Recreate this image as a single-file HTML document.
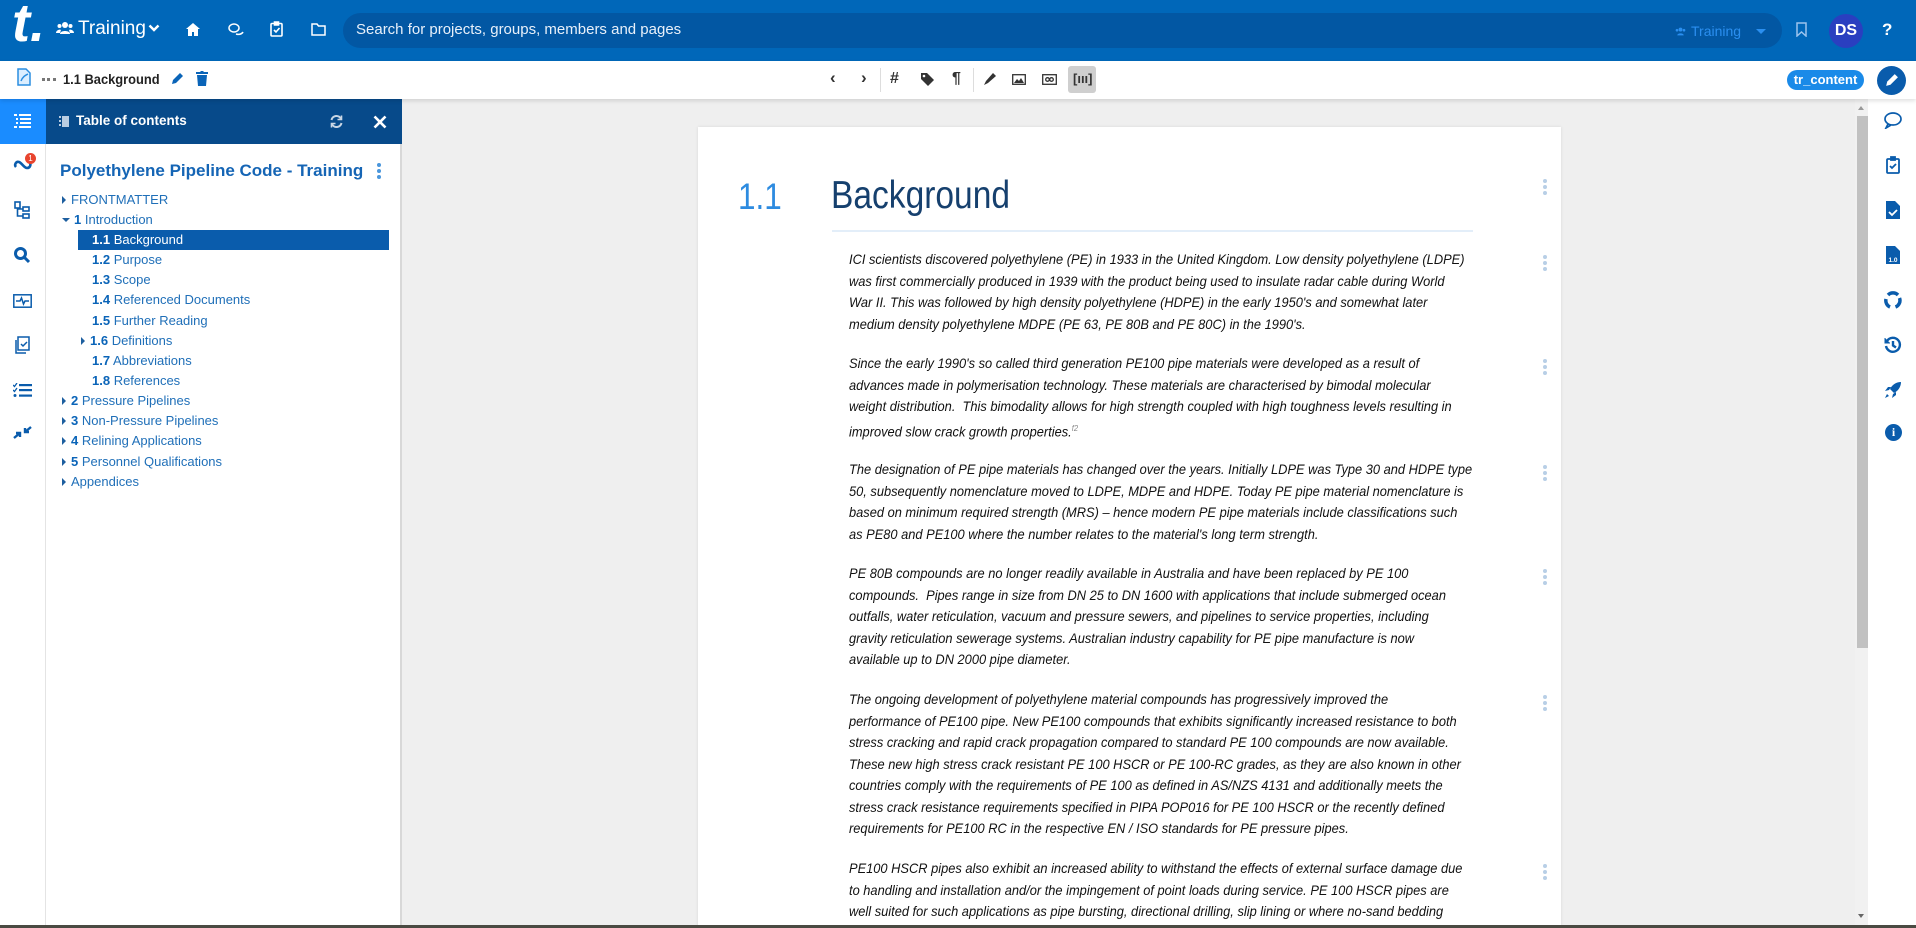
<!DOCTYPE html>
<html><head><meta charset="utf-8"><style>
*{box-sizing:border-box;margin:0;padding:0}
body{width:1916px;height:928px;overflow:hidden;position:relative;background:#efefef;font-family:"Liberation Sans",sans-serif}
.abs{position:absolute}
#top{left:0;top:0;width:1916px;height:61px;background:#0067b9}
#bar2{left:0;top:61px;width:1916px;height:38px;background:#fff;box-shadow:0 2px 4px rgba(0,0,0,.12);z-index:2}
#rail{left:0;top:99px;width:46px;height:829px;background:#fff;border-right:1px solid #e4e4e4}
#toc{left:46px;top:99px;width:356px;height:829px;background:#fff;border-right:2px solid #d8d8d8}
#tochd{left:46px;top:99px;width:356px;height:45px;background:#074a8a}
.ti{position:absolute;font-size:13px;color:#1f6fb8;white-space:nowrap}
.ti b{color:#0a64b8;font-weight:bold}
.tri{display:inline-block;width:0;height:0;border-left:4px solid #1d5f9f;border-top:4px solid transparent;border-bottom:4px solid transparent;margin-right:5px;vertical-align:0}
.trid{display:inline-block;width:0;height:0;border-top:4px solid #1d5f9f;border-left:4px solid transparent;border-right:4px solid transparent;margin-right:4px;vertical-align:2px}
#page{left:698px;top:127px;width:863px;height:801px;background:#fff;box-shadow:0 0 3px rgba(0,0,0,.1)}
.p{position:absolute;left:849px;font-style:italic;font-size:13.6px;color:#111;white-space:nowrap;transform:scaleX(.945);transform-origin:0 0;line-height:21.5px}
.dots{position:absolute;left:1543px;width:4px}
.dots i{display:block;width:4px;height:4px;border-radius:2px;background:#b8cfe6;margin-bottom:2px}
</style></head><body>
<div id="top" class="abs"></div>
<div class="abs" style="left:12px;top:-8px;color:#fff;font:italic bold 54px 'Liberation Sans',sans-serif">t.</div>
<svg class="abs" style="left:56px;top:21px" width="18" height="14" viewBox="0 0 18 14" fill="#fff"><circle cx="9" cy="4" r="3"/><circle cx="3.5" cy="5" r="2"/><circle cx="14.5" cy="5" r="2"/><path d="M4 13c0-4 10-4 10 0z"/><path d="M0 12c0-3 4-4 5-3l-1 3zM18 12c0-3-4-4-5-3l1 3z"/></svg>
<div class="abs" style="left:78px;top:18px;color:#fff;font-size:19px">Training</div>
<svg class="abs" style="left:148px;top:24px" width="12" height="9" viewBox="0 0 12 9"><path d="M1.5 1.5l4.5 4.5 4.5-4.5" stroke="#fff" stroke-width="2.4" fill="none"/></svg>
<svg class="abs" style="left:186px;top:23px" width="14" height="13" viewBox="0 0 14 13" fill="#fff"><path d="M7 0L0 6h2v7h4V9h2v4h4V6h2z"/></svg>
<svg class="abs" style="left:228px;top:23px" width="16" height="14" viewBox="0 0 16 14" fill="none" stroke="#fff" stroke-width="1.5"><ellipse cx="6" cy="5" rx="5" ry="4"/><path d="M8 11c3 1 6 0 7-2"/></svg>
<svg class="abs" style="left:270px;top:21px" width="13" height="16" viewBox="0 0 13 16" fill="none" stroke="#fff" stroke-width="1.6"><rect x="1" y="2.5" width="11" height="12.5" rx="1"/><path d="M4 9l2 2 3.5-4"/><path d="M4.5 1h4v3h-4z" fill="#fff"/></svg>
<svg class="abs" style="left:311px;top:23px" width="15" height="13" viewBox="0 0 15 13" fill="none" stroke="#fff" stroke-width="1.5"><path d="M1 1h5l1.5 2H14v9H1z"/></svg>
<div class="abs" style="left:343px;top:13px;width:1439px;height:35px;border-radius:18px;background:#0257a3"></div>
<div class="abs" style="left:356px;top:21px;color:#e8f0fa;font-size:15px">Search for projects, groups, members and pages</div>
<svg class="abs" style="left:1674px;top:27px" width="13" height="9" viewBox="0 0 18 14" fill="#2b8ff0"><circle cx="9" cy="4" r="3"/><circle cx="3.5" cy="5" r="2"/><circle cx="14.5" cy="5" r="2"/><path d="M4 13c0-4 10-4 10 0z"/></svg>
<div class="abs" style="left:1691px;top:23px;color:#2b8ff0;font-size:14px">Training</div>
<div class="abs" style="left:1756px;top:29px;border-top:5px solid #2b8ff0;border-left:5px solid transparent;border-right:5px solid transparent"></div>
<svg class="abs" style="left:1796px;top:22px" width="11" height="15" viewBox="0 0 11 15" fill="none" stroke="#9cc4ee" stroke-width="1.5"><path d="M1 1h9v13l-4.5-4-4.5 4z"/></svg>
<div class="abs" style="left:1829px;top:14px;width:34px;height:34px;border-radius:17px;background:#2a3fc0;color:#fff;font-weight:bold;font-size:16px;text-align:center;line-height:34px">DS</div>
<div class="abs" style="left:1882px;top:20px;color:#fff;font-weight:bold;font-size:17px">?</div>

<div id="bar2" class="abs"></div>
<div style="position:absolute;z-index:3;left:0;top:61px;width:1916px;height:38px">
<svg class="abs" style="left:17px;top:7px" width="14" height="18" viewBox="0 0 14 18"><path d="M1 1h8l4 4v12H1z" fill="#dbeeff" stroke="#2a8de0" stroke-width="1.5"/><path d="M4 13c2-5 5-6 7-7" stroke="#2a8de0" stroke-width="1.5" fill="none"/></svg>
<div class="abs" style="left:42px;top:17px;width:14px;height:3px;border-top:3px dotted #777"></div>
<div class="abs" style="left:63px;top:10px;font-weight:bold;font-size:14px;color:#222;transform:scaleX(.92);transform-origin:0 0">1.1 Background</div>
<svg class="abs" style="left:170px;top:11px" width="14" height="14" viewBox="0 0 14 14"><path d="M2 12l1-4 7-7 3 3-7 7z" fill="#0a64b8"/></svg>
<svg class="abs" style="left:196px;top:10px" width="12" height="15" viewBox="0 0 12 15" fill="#0a64b8"><path d="M0 1h4l1-1h2l1 1h4v2H0zM1 4h10l-1 11H2z"/></svg>
<div class="abs" style="left:830px;top:7px;font-size:17px;font-weight:bold;color:#333">&#8249;</div>
<div class="abs" style="left:861px;top:7px;font-size:17px;font-weight:bold;color:#333">&#8250;</div>
<div class="abs" style="left:880px;top:7px;width:1px;height:24px;background:#ddd"></div>
<div class="abs" style="left:890px;top:9px;font-size:16px;font-weight:bold;color:#333">#</div>
<svg class="abs" style="left:920px;top:11px" width="15" height="15" viewBox="0 0 15 15"><path d="M1 1h6l7 7-6 6-7-7z" fill="#333"/><circle cx="4" cy="4" r="1.3" fill="#fff"/></svg>
<div class="abs" style="left:952px;top:9px;font-size:16px;font-weight:bold;color:#333">¶</div>
<div class="abs" style="left:973px;top:7px;width:1px;height:24px;background:#ddd"></div>
<svg class="abs" style="left:983px;top:11px" width="14" height="14" viewBox="0 0 14 14"><path d="M1 13l2-4 7-8 3 3-8 7z" fill="#333"/></svg>
<svg class="abs" style="left:1012px;top:13px" width="14" height="11" viewBox="0 0 14 11"><rect x=".7" y=".7" width="12.6" height="9.6" fill="none" stroke="#333" stroke-width="1.3"/><path d="M2 9l3-4 2 2 2-3 3 5z" fill="#333"/></svg>
<svg class="abs" style="left:1042px;top:13px" width="15" height="11" viewBox="0 0 15 11" fill="none" stroke="#333" stroke-width="1.3"><rect x=".7" y=".7" width="13.6" height="9.6"/><circle cx="5.5" cy="5.5" r="1.8"/><circle cx="9.5" cy="5.5" r="1.8"/></svg>
<div class="abs" style="left:1068px;top:5px;width:28px;height:27px;border-radius:3px;background:#cfcfcf"></div>
<div class="abs" style="left:1073px;top:10px;font-size:13px;font-weight:bold;color:#333">[ııı]</div>
<div class="abs" style="left:1787px;top:9px;width:77px;height:20px;border-radius:10px;background:#1a8ae8;color:#fff;font-weight:bold;font-size:13px;text-align:center;line-height:20px">tr_content</div>
<div class="abs" style="left:1877px;top:5px;width:29px;height:29px;border-radius:15px;background:#0a5cac"></div>
<svg class="abs" style="left:1884px;top:12px" width="15" height="15" viewBox="0 0 14 14"><path d="M2 12l1-4 7-7 3 3-7 7z" fill="#fff"/></svg>
</div>

<div id="rail" class="abs"></div>
<div class="abs" style="left:0;top:99px;width:46px;height:45px;background:#1a8cff"></div>
<svg class="abs" style="left:14px;top:113px" width="17" height="16" viewBox="0 0 17 16" fill="#fff"><rect x="0" y="1" width="3" height="2"/><rect x="5" y="1" width="12" height="2"/><rect x="2" y="5" width="2" height="2"/><rect x="6" y="5" width="11" height="2"/><rect x="2" y="9" width="2" height="2"/><rect x="6" y="9" width="11" height="2"/><rect x="0" y="13" width="3" height="2"/><rect x="5" y="13" width="12" height="2"/></svg>
<svg class="abs" style="left:13px;top:158px" width="20" height="12" viewBox="0 0 20 12" fill="none" stroke="#0a5cac" stroke-width="2.6"><path d="M3 9c-2-2 0-6 3-5s5 6 8 6 4-3 3-5"/></svg>
<div class="abs" style="left:25px;top:153px;width:11px;height:11px;border-radius:6px;background:#e8442e;color:#fff;font-size:8px;text-align:center;line-height:11px">1</div>
<svg class="abs" style="left:14px;top:201px" width="16" height="18" viewBox="0 0 16 18" fill="none" stroke="#0a5cac" stroke-width="1.6"><rect x="1" y="1" width="5" height="6"/><rect x="9" y="6" width="6" height="4"/><rect x="9" y="13" width="6" height="4"/><path d="M3.5 7v8h5M3.5 8h5"/></svg>
<svg class="abs" style="left:13px;top:246px" width="18" height="18" viewBox="0 0 18 18" fill="none" stroke="#0a5cac" stroke-width="3"><circle cx="7.5" cy="7.5" r="5"/><path d="M11 11l5 5"/></svg>
<svg class="abs" style="left:13px;top:294px" width="19" height="14" viewBox="0 0 19 14" fill="none" stroke="#0a5cac" stroke-width="1.5"><rect x=".8" y=".8" width="17.4" height="12.4"/><path d="M3 7h4l1.5-3 2 6 1.5-3h4"/></svg>
<svg class="abs" style="left:15px;top:336px" width="15" height="18" viewBox="0 0 15 18" fill="none" stroke="#0a5cac" stroke-width="1.5"><rect x="3" y="1" width="11" height="13"/><path d="M1 4v13h10"/><path d="M6 8l2 2 4-4"/></svg>
<svg class="abs" style="left:13px;top:383px" width="19" height="15" viewBox="0 0 19 15" fill="#0a5cac"><path d="M0 2l1.5 1.5L4 0" stroke="#0a5cac" stroke-width="1.3" fill="none"/><rect x="6" y="1" width="13" height="2.2"/><path d="M0 7l1.5 1.5L4 5" stroke="#0a5cac" stroke-width="1.3" fill="none"/><rect x="6" y="6" width="13" height="2.2"/><circle cx="2" cy="12.5" r="1.5"/><rect x="6" y="11.5" width="13" height="2.2"/></svg>
<svg class="abs" style="left:13px;top:424px" width="19" height="17" viewBox="0 0 19 17" fill="none" stroke="#0a5cac" stroke-width="2.4"><path d="M1 14l6-5M3 9h4v4M18 3l-6 5M12 4v4h4"/></svg>

<div id="toc" class="abs"></div>
<div id="tochd" class="abs"></div>
<svg class="abs" style="left:59px;top:116px" width="10" height="11" viewBox="0 0 10 11" fill="#b9cde2"><rect x="0" y="0" width="2" height="2"/><rect x="3" y="0" width="7" height="11"/><rect x="0" y="4" width="2" height="2"/><rect x="0" y="8" width="2" height="2"/></svg>
<div class="abs" style="left:76px;top:113px;color:#fff;font-weight:bold;font-size:13.5px">Table of contents</div>
<svg class="abs" style="left:329px;top:114px" width="15" height="15" viewBox="0 0 15 15" fill="none" stroke="#c9d6e4" stroke-width="2"><path d="M2.5 6A5 5 0 0 1 12 5M12.5 9A5 5 0 0 1 3 10"/><path d="M12.5 1.5v4h-4M2.5 13.5v-4h4" stroke-width="1.6"/></svg>
<svg class="abs" style="left:373px;top:115px" width="14" height="14" viewBox="0 0 14 14" stroke="#fff" stroke-width="2.6"><path d="M1.5 1.5l11 11M12.5 1.5l-11 11"/></svg>
<div class="abs" style="left:60px;top:161px;font-weight:bold;font-size:17px;color:#1565b5">Polyethylene Pipeline Code - Training</div>
<div class="abs" style="left:377px;top:163px"><div class="dots" style="left:0;position:relative"><i style="background:#4a96dc"></i><i style="background:#4a96dc"></i><i style="background:#4a96dc"></i></div></div>
<div class="abs" style="left:78px;top:230px;width:311px;height:20px;background:#0a5cac"></div>
<div class="ti" style="left:62px;top:192px"><span class="tri"></span>FRONTMATTER</div>
<div class="ti" style="left:62px;top:212px"><span class="trid"></span><b>1</b> Introduction</div>
<div class="ti" style="left:92px;top:232px;color:#fff"><b style="color:#fff">1.1</b> Background</div>
<div class="ti" style="left:92px;top:252px"><b>1.2</b> Purpose</div>
<div class="ti" style="left:92px;top:272px"><b>1.3</b> Scope</div>
<div class="ti" style="left:92px;top:292px"><b>1.4</b> Referenced Documents</div>
<div class="ti" style="left:92px;top:313px"><b>1.5</b> Further Reading</div>
<div class="ti" style="left:81px;top:333px"><span class="tri"></span><b>1.6</b> Definitions</div>
<div class="ti" style="left:92px;top:353px"><b>1.7</b> Abbreviations</div>
<div class="ti" style="left:92px;top:373px"><b>1.8</b> References</div>
<div class="ti" style="left:62px;top:393px"><span class="tri"></span><b>2</b> Pressure Pipelines</div>
<div class="ti" style="left:62px;top:413px"><span class="tri"></span><b>3</b> Non-Pressure Pipelines</div>
<div class="ti" style="left:62px;top:433px"><span class="tri"></span><b>4</b> Relining Applications</div>
<div class="ti" style="left:62px;top:454px"><span class="tri"></span><b>5</b> Personnel Qualifications</div>
<div class="ti" style="left:62px;top:474px"><span class="tri"></span>Appendices</div>

<div id="page" class="abs"></div>
<div class="abs" style="left:738px;top:176px;font-size:37px;color:#2d8be0;transform:scaleX(.85);transform-origin:0 0">1.1</div>
<div class="abs" style="left:831px;top:174px;font-size:39px;color:#16406e;transform:scaleX(.86);transform-origin:0 0">Background</div>
<div class="abs" style="left:832px;top:230px;width:641px;height:2px;background:#e3eef9"></div>
<div class="dots" style="top:179px"><i></i><i></i><i></i></div>
<div class="dots" style="top:255px"><i></i><i></i><i></i></div>
<div class="dots" style="top:359px"><i></i><i></i><i></i></div>
<div class="dots" style="top:465px"><i></i><i></i><i></i></div>
<div class="dots" style="top:569px"><i></i><i></i><i></i></div>
<div class="dots" style="top:695px"><i></i><i></i><i></i></div>
<div class="dots" style="top:864px"><i></i><i></i><i></i></div>

<div class="p" style="top:249px">ICI scientists discovered polyethylene (PE) in 1933 in the United Kingdom. Low density polyethylene (LDPE)<br>was first commercially produced in 1939 with the product being used to insulate radar cable during World<br>War II. This was followed by high density polyethylene (HDPE) in the early 1950's and somewhat later<br>medium density polyethylene MDPE (PE 63, PE 80B and PE 80C) in the 1990's.</div>
<div class="p" style="top:353px">Since the early 1990's so called third generation PE100 pipe materials were developed as a result of<br>advances made in polymerisation technology. These materials are characterised by bimodal molecular<br>weight distribution.&nbsp; This bimodality allows for high strength coupled with high toughness levels resulting in<br>improved slow crack growth properties.<sup style="font-size:8px;color:#888">f2</sup></div>
<div class="p" style="top:459px">The designation of PE pipe materials has changed over the years. Initially LDPE was Type 30 and HDPE type<br>50, subsequently nomenclature moved to LDPE, MDPE and HDPE. Today PE pipe material nomenclature is<br>based on minimum required strength (MRS) – hence modern PE pipe materials include classifications such<br>as PE80 and PE100 where the number relates to the material's long term strength.</div>
<div class="p" style="top:563px">PE 80B compounds are no longer readily available in Australia and have been replaced by PE 100<br>compounds.&nbsp; Pipes range in size from DN 25 to DN 1600 with applications that include submerged ocean<br>outfalls, water reticulation, vacuum and pressure sewers, and pipelines to service properties, including<br>gravity reticulation sewerage systems. Australian industry capability for PE pipe manufacture is now<br>available up to DN 2000 pipe diameter.</div>
<div class="p" style="top:689px">The ongoing development of polyethylene material compounds has progressively improved the<br>performance of PE100 pipe. New PE100 compounds that exhibits significantly increased resistance to both<br>stress cracking and rapid crack propagation compared to standard PE 100 compounds are now available.<br>These new high stress crack resistant PE 100 HSCR or PE 100-RC grades, as they are also known in other<br>countries comply with the requirements of PE 100 as defined in AS/NZS 4131 and additionally meets the<br>stress crack resistance requirements specified in PIPA POP016 for PE 100 HSCR or the recently defined<br>requirements for PE100 RC in the respective EN / ISO standards for PE pressure pipes.</div>
<div class="p" style="top:858px">PE100 HSCR pipes also exhibit an increased ability to withstand the effects of external surface damage due<br>to handling and installation and/or the impingement of point loads during service. PE 100 HSCR pipes are<br>well suited for such applications as pipe bursting, directional drilling, slip lining or where no-sand bedding</div>

<div class="abs" style="left:1855px;top:99px;width:13px;height:829px;background:#f1f1f1"></div>
<div class="abs" style="left:1857px;top:116px;width:12px;height:532px;background:#c1c1c1"></div>
<div class="abs" style="left:1858px;top:106px;border-bottom:4px solid #999;border-left:3px solid transparent;border-right:3px solid transparent"></div>
<div class="abs" style="left:1858px;top:914px;border-top:4px solid #666;border-left:3px solid transparent;border-right:3px solid transparent"></div>
<div class="abs" style="left:1868px;top:99px;width:48px;height:829px;background:#fff"></div>
<svg class="abs" style="left:1884px;top:112px" width="18" height="17" viewBox="0 0 18 17" fill="none" stroke="#0a5cac" stroke-width="1.7"><ellipse cx="9" cy="7" rx="8" ry="6"/><path d="M4 12l-2 4 5-3"/></svg>
<svg class="abs" style="left:1886px;top:156px" width="14" height="18" viewBox="0 0 14 18" fill="none" stroke="#0a5cac" stroke-width="1.8"><rect x="1" y="3" width="12" height="14" rx="1"/><path d="M4 10l2 2 4-4"/><path d="M5 1h4v3H5z" fill="#0a5cac"/></svg>
<svg class="abs" style="left:1886px;top:201px" width="14" height="18" viewBox="0 0 14 18"><path d="M0 0h9l5 5v13H0z" fill="#0a5cac"/><path d="M3 11l3 3 5-5" stroke="#fff" stroke-width="1.8" fill="none"/></svg>
<svg class="abs" style="left:1886px;top:246px" width="14" height="18" viewBox="0 0 14 18"><path d="M0 0h9l5 5v13H0z" fill="#0a5cac"/><text x="7" y="16" font-size="6.5" font-weight="bold" fill="#fff" text-anchor="middle" font-family="Liberation Sans">1.0</text></svg>
<svg class="abs" style="left:1884px;top:291px" width="18" height="18" viewBox="0 0 18 18" fill="none" stroke="#0a5cac" stroke-width="3.5"><path d="M4 4a7 7 0 0 1 10 0M15.5 7a7 7 0 0 1-4 9M6 16a7 7 0 0 1-4-8"/></svg>
<svg class="abs" style="left:1884px;top:336px" width="18" height="18" viewBox="0 0 18 18" fill="none" stroke="#0a5cac" stroke-width="2.4"><path d="M3 5a7 7 0 1 1-1 5"/><path d="M1 2v5h5" fill="#0a5cac" stroke-width="1"/><path d="M9 5v4.5l3 2"/></svg>
<svg class="abs" style="left:1884px;top:381px" width="18" height="18" viewBox="0 0 18 18" fill="#0a5cac"><path d="M17 1c-5 0-9 3-11 7l4 4c4-2 7-6 7-11zM5 9L1 10l3-4h3zM9 13l-1 4 4-3v-3zM3 13l2 2-4 2z"/></svg>
<div class="abs" style="left:1885px;top:424px;width:17px;height:17px;border-radius:9px;background:#0a5cac;color:#fff;font-weight:bold;font-size:12px;text-align:center;line-height:17px;font-family:'Liberation Serif',serif">i</div>
<div class="abs" style="left:0;top:925px;width:1916px;height:3px;background:#4a4a42"></div>
</body></html>
